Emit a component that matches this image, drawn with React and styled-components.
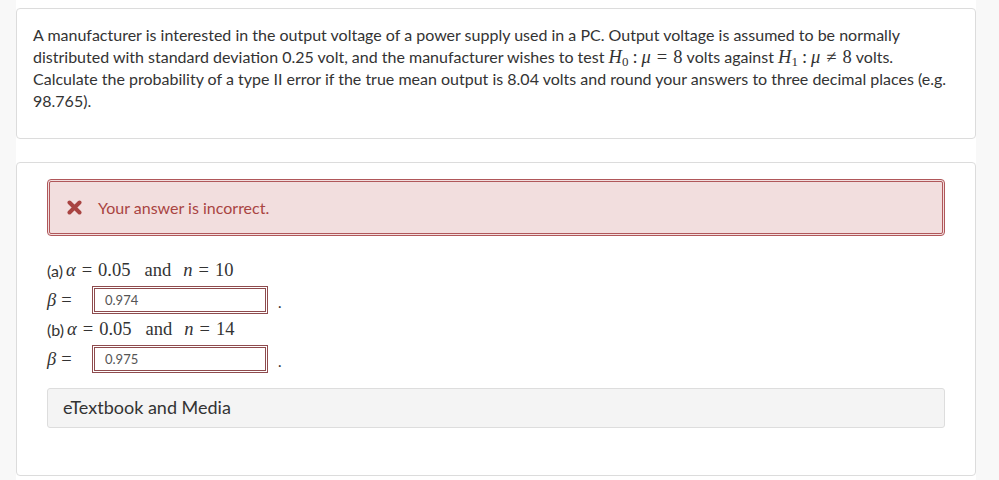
import React from "react";
import styled, { createGlobalStyle } from "styled-components";

const Global = createGlobalStyle`
  html, body { margin: 0; padding: 0; background: #f8f8f8; }
  body { font-family: Lato, "Noto Sans", sans-serif; color: #333; }
`;

const Page = styled.div`
  margin-left: 16px;
  width: 960px;
  background: #fff;
  padding-top: 8px;
  height: 472px;
  display: flex;
  flex-direction: column;
  gap: 23px;
`;

const Card = styled.div`
  border: 1px solid #dcdcdc;
  border-radius: 4px;
  background: #fff;
  padding: ${(p) => p.$pad};
`;

const Question = styled.p`
  margin: 0;
  font-size: 16px;
  line-height: 22px;
  color: #333;
`;

const M = styled.span`
  font-family: "Liberation Serif", "Times New Roman", serif;
  font-size: 18.5px;
  font-style: ${(p) => (p.$i ? "italic" : "normal")};
  padding: ${(p) => p.$pad || "0"};
`;

const Sub = styled.sub`
  font-family: "Liberation Serif", serif;
  font-size: 13px;
  vertical-align: -3px;
  line-height: 0;
`;

const Alert = styled.div`
  height: 57px;
  box-sizing: border-box;
  border: 3px double #b0575a;
  border-radius: 4px;
  background: #f2dede;
  display: flex;
  align-items: center;
  padding-left: 17px;
  gap: 16px;
  color: #a94442;
  font-size: 16px;
  padding-bottom: 1px;
`;

const Row = styled.div`
  display: flex;
  align-items: center;
  height: ${(p) => p.$h}px;
  font-size: 16px;
  color: #333;
`;

const Label = styled.span`
  margin-right: 3px;
`;

const Beta = styled.span`
  font-family: "Liberation Serif", serif;
  font-size: 18.5px;
  width: 45px;
  display: inline-flex;
  gap: 5px;
`;

const InputBox = styled.div`
  width: 176px;
  height: 28px;
  box-sizing: border-box;
  border: 3px double #8e4b4e;
  display: flex;
  align-items: center;
  padding-left: 10px;
  font-size: 13px;
  color: #555;
`;

const Dot = styled.span`
  margin-left: 10px;
  font-size: 15px;
  position: relative;
  top: 2px;
`;

const Parts = styled.div`
  margin-top: 20px;
  display: flex;
  flex-direction: column;
`;

const Media = styled.div`
  margin-top: 14px;
  height: 40px;
  box-sizing: border-box;
  background: #f4f4f4;
  border: 1px solid #dddddd;
  border-radius: 3px;
  display: flex;
  align-items: center;
  padding-left: 15px;
  padding-bottom: 2px;
  font-size: 18px;
  color: #333;
`;

const XIcon = () => (
  <svg width="15" height="15" viewBox="0 0 15 15">
    <path d="M2.5 2.5 L12.5 12.5 M12.5 2.5 L2.5 12.5" stroke="#a94442" strokeWidth="4" strokeLinecap="round" />
  </svg>
);

const Part = ({ label, n, value }) => (
  <>
    <Row $h={29}>
      <Label>({label})</Label>
      <M $i>α</M>
      <M $pad="0 6px">=</M>
      <M>0.05</M>
      <M $pad="0 0 0 14px">and</M>
      <M $i $pad="0 0 0 12px">n</M>
      <M $pad="0 6px">=</M>
      <M>{n}</M>
    </Row>
    <Row $h={30}>
      <Beta>
        <M $i>β</M>
        <M>=</M>
      </Beta>
      <InputBox>{value}</InputBox>
      <Dot>.</Dot>
    </Row>
  </>
);

export default function App() {
  return (
    <>
      <Global />
      <Page>
        <Card $pad="15px 16px 26px">
          <Question>
            A manufacturer is interested in the output voltage of a power supply used in a PC. Output voltage is assumed to be normally distributed with standard deviation 0.25 volt, and the manufacturer wishes to test{" "}
            <M $i>H</M>
            <Sub>0</Sub>
            <M $pad="0 4px">:</M>
            <M $i>μ</M>
            <M $pad="0 6px">=</M>
            <M>8</M> volts against{" "}
            <M $i>H</M>
            <Sub>1</Sub>
            <M $pad="0 4px">:</M>
            <M $i>μ</M>
            <M $pad="0 6px">≠</M>
            <M>8</M> volts. Calculate the probability of a type II error if the true mean output is 8.04 volts and round your answers to three decimal places (e.g. 98.765).
          </Question>
        </Card>
        <Card $pad="16px 30px 47px">
          <Alert>
            <XIcon />
            <span>Your answer is incorrect.</span>
          </Alert>
          <Parts>
            <Part label="a" n="10" value="0.974" />
            <Part label="b" n="14" value="0.975" />
          </Parts>
          <Media>eTextbook and Media</Media>
        </Card>
      </Page>
    </>
  );
}
